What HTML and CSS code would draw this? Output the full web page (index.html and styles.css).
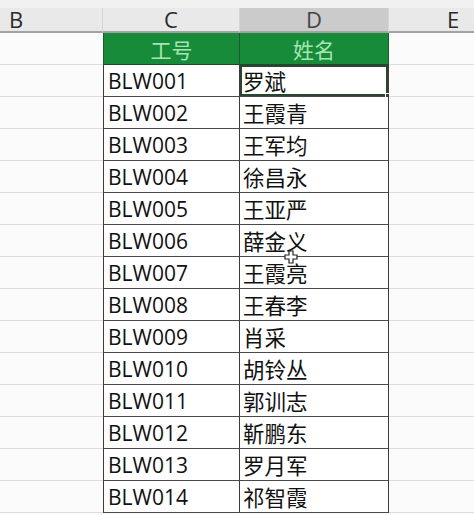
FILE: index.html
```html
<!DOCTYPE html>
<html lang="zh">
<head>
<meta charset="utf-8">
<title>Sheet</title>
<link rel="stylesheet" href="styles.css">
</head>
<body>
<div class="topstrip"></div>
<div class="sheet">
  <div class="colhead b">B</div>
  <div class="colhead c">C</div>
  <div class="colhead d">D</div>
  <div class="colhead e">E</div>

  <div class="cell side"></div>
  <div class="cell green c">工号</div>
  <div class="cell green d">姓名</div>
  <div class="cell side"></div>

  <div class="cell side"></div><div class="cell data c">BLW001</div><div class="cell data d sel">罗斌<span class="handle"></span></div><div class="cell side"></div>
  <div class="cell side"></div><div class="cell data c">BLW002</div><div class="cell data d">王霞青</div><div class="cell side"></div>
  <div class="cell side"></div><div class="cell data c">BLW003</div><div class="cell data d">王军均</div><div class="cell side"></div>
  <div class="cell side"></div><div class="cell data c">BLW004</div><div class="cell data d">徐昌永</div><div class="cell side"></div>
  <div class="cell side"></div><div class="cell data c">BLW005</div><div class="cell data d">王亚严</div><div class="cell side"></div>
  <div class="cell side"></div><div class="cell data c">BLW006</div><div class="cell data d">薛金义<svg class="cursor" width="14" height="14" viewBox="0 0 14 14"><path d="M5 1h4v4h4v4H9v4H5V9H1V5h4z" fill="#fff" stroke="#222" stroke-width="1.2"/></svg></div><div class="cell side"></div>
  <div class="cell side"></div><div class="cell data c">BLW007</div><div class="cell data d">王霞亮</div><div class="cell side"></div>
  <div class="cell side"></div><div class="cell data c">BLW008</div><div class="cell data d">王春李</div><div class="cell side"></div>
  <div class="cell side"></div><div class="cell data c">BLW009</div><div class="cell data d">肖采</div><div class="cell side"></div>
  <div class="cell side"></div><div class="cell data c">BLW010</div><div class="cell data d">胡铃丛</div><div class="cell side"></div>
  <div class="cell side"></div><div class="cell data c">BLW011</div><div class="cell data d">郭训志</div><div class="cell side"></div>
  <div class="cell side"></div><div class="cell data c">BLW012</div><div class="cell data d">靳鹏东</div><div class="cell side"></div>
  <div class="cell side"></div><div class="cell data c">BLW013</div><div class="cell data d">罗月军</div><div class="cell side"></div>
  <div class="cell side"></div><div class="cell data c">BLW014</div><div class="cell data d">祁智霞</div><div class="cell side"></div>
</div>
</body>
</html>
```
FILE: styles.css
```css
* { box-sizing: border-box; }
html, body { margin: 0; padding: 0; background: #fbfbfb; overflow: hidden; }
body {
  width: 474px;
  height: 515px;
  font-family: "Open Sans", "Noto Sans CJK SC", sans-serif;
  color: #111;
}
.topstrip { height: 8px; background: #f1f1f1; }
.sheet {
  display: grid;
  grid-template-columns: 103px 137px 149px 1fr;
  grid-template-rows: 25px;
  grid-auto-rows: 32px;
}
.colhead {
  background: #e9e9e9;
  border-bottom: 2px solid #a3a3a3;
  border-right: 1px solid #d6d6d6;
  font-family: "Open Sans", sans-serif;
  font-size: 22px;
  color: #2a2a2a;
  line-height: 23px;
  text-align: center;
}
.colhead.b { text-align: left; padding-left: 9px; }
.colhead.e { text-align: left; padding-left: 58px; border-right: none; }
.colhead.d { background: #cbcbcb; color: #444; }
.cell {
  border-bottom: 1px solid #dcdcdc;
  display: flex;
  align-items: center;
  font-size: 21px;
  position: relative;
}
.cell.side { background: #fbfbfb; }
.cell.c { border-left: 1px solid #3c3c3c; border-right: 1px solid #3c3c3c; padding-left: 4px; }
.cell.d { border-right: 1px solid #3c3c3c; padding-left: 3px; }
.cell.data { background: #fff; border-bottom: 1px solid #4a4a4a; }
.cell.green {
  background: #178b3a;
  color: #a4e6b1;
  justify-content: center;
  padding-left: 0;
  font-size: 21px;
  border-bottom: 1px solid #1f4a2a;
  border-left-color: #1f5a2f;
  border-right-color: #1f5a2f;
}
.cell.data.d { font-size: 21.5px; }
.cell.sel { box-shadow: inset 0 0 0 2px #2b4533; }
.handle {
  position: absolute;
  right: -3px;
  bottom: -3px;
  width: 6px;
  height: 6px;
  background: #2b4533;
  border: 1px solid #fff;
}
.cursor { position: absolute; left: 44px; top: 25px; z-index: 2; }
```
